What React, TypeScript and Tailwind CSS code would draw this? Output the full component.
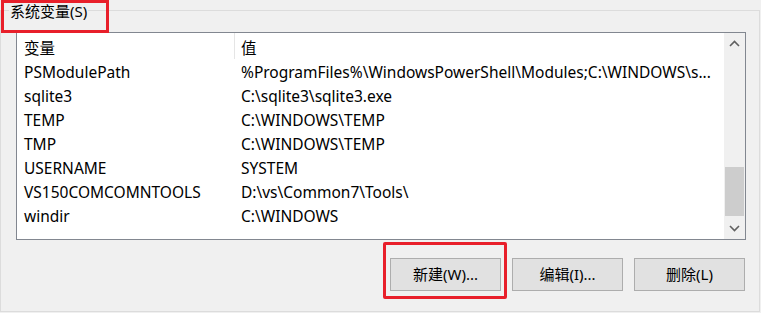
import React from "react";

const rows: [string, string][] = [
  ["PSModulePath", "%ProgramFiles%\\WindowsPowerShell\\Modules;C:\\WINDOWS\\s..."],
  ["sqlite3", "C:\\sqlite3\\sqlite3.exe"],
  ["TEMP", "C:\\WINDOWS\\TEMP"],
  ["TMP", "C:\\WINDOWS\\TEMP"],
  ["USERNAME", "SYSTEM"],
  ["VS150COMCOMNTOOLS", "D:\\vs\\Common7\\Tools\\"],
  ["windir", "C:\\WINDOWS"],
];

function Chevron({ up }: { up?: boolean }) {
  return (
    <svg width="11" height="7" viewBox="0 0 11 7" className="block">
      <path
        d={up ? "M1 6 L5.5 1.5 L10 6" : "M1 1 L5.5 5.5 L10 1"}
        fill="none"
        stroke="#606060"
        strokeWidth="1.6"
      />
    </svg>
  );
}

function Button({ label }: { label: string }) {
  return (
    <button className="w-[111px] h-[33px] bg-[#e1e1e1] border border-[#adadad] text-[15px] text-black flex items-center justify-center">
      {label}
    </button>
  );
}

export default function App() {
  return (
    <div
      className="relative w-[761px] h-[313px] bg-[#f0f0f0] overflow-hidden pt-[10px] pr-[1px]"
      style={{ fontFamily: '"Noto Sans", "Noto Sans CJK SC", sans-serif' }}
    >
      {/* group box */}
      <div className="h-[302px] border border-[#dcdcdc] pl-[15px] pr-[13px] pt-[21px] flex flex-col">
        <div className="h-[208px] border border-[#828790] bg-white flex">
          <div className="flex-1 flex flex-col text-[15.5px] leading-[22px] text-black">
            <div className="h-[26px] flex items-center">
              <div className="w-[217px] pl-[7px] pt-[3px]">变量</div>
              <div className="h-full w-px bg-[#e5e5e5]" />
              <div className="pl-[6px] pt-[3px]">值</div>
            </div>
            {rows.map(([name, value]) => (
              <div key={name} className="h-[24px] flex items-center whitespace-nowrap pt-[2px]">
                <div className="w-[218px] pl-[7px]">{name}</div>
                <div className="pl-[6px] overflow-hidden">{value}</div>
              </div>
            ))}
          </div>
          <div className="w-[21px] bg-[#f0f0f0] flex flex-col">
            <div className="h-[21px] flex items-center justify-center">
              <Chevron up />
            </div>
            <div className="flex-1 flex flex-col justify-end pb-[1px]">
              <div className="h-[49px] bg-[#cdcdcd] mx-[1px] mb-[1px]" />
            </div>
            <div className="h-[21px] flex items-center justify-center">
              <Chevron />
            </div>
          </div>
        </div>
        <div className="flex justify-end gap-[11px] mt-[18px] pr-[1px]">
          <Button label="新建(W)..." />
          <Button label="编辑(I)..." />
          <Button label="删除(L)" />
        </div>
      </div>

      {/* group title */}
      <div className="absolute left-[9px] top-[1px] px-[1px] bg-[#f0f0f0] text-[15px] text-black leading-[20px]">
        系统变量(S)
      </div>

      {/* red highlight boxes */}
      <div className="absolute left-[1px] top-0 w-[108px] h-[33px] border-[3px] border-[#e81f2a]" />
      <div className="absolute left-[383px] top-[242px] w-[124px] h-[57px] border-[3px] border-[#e81f2a] rounded-[2px]" />
    </div>
  );
}
